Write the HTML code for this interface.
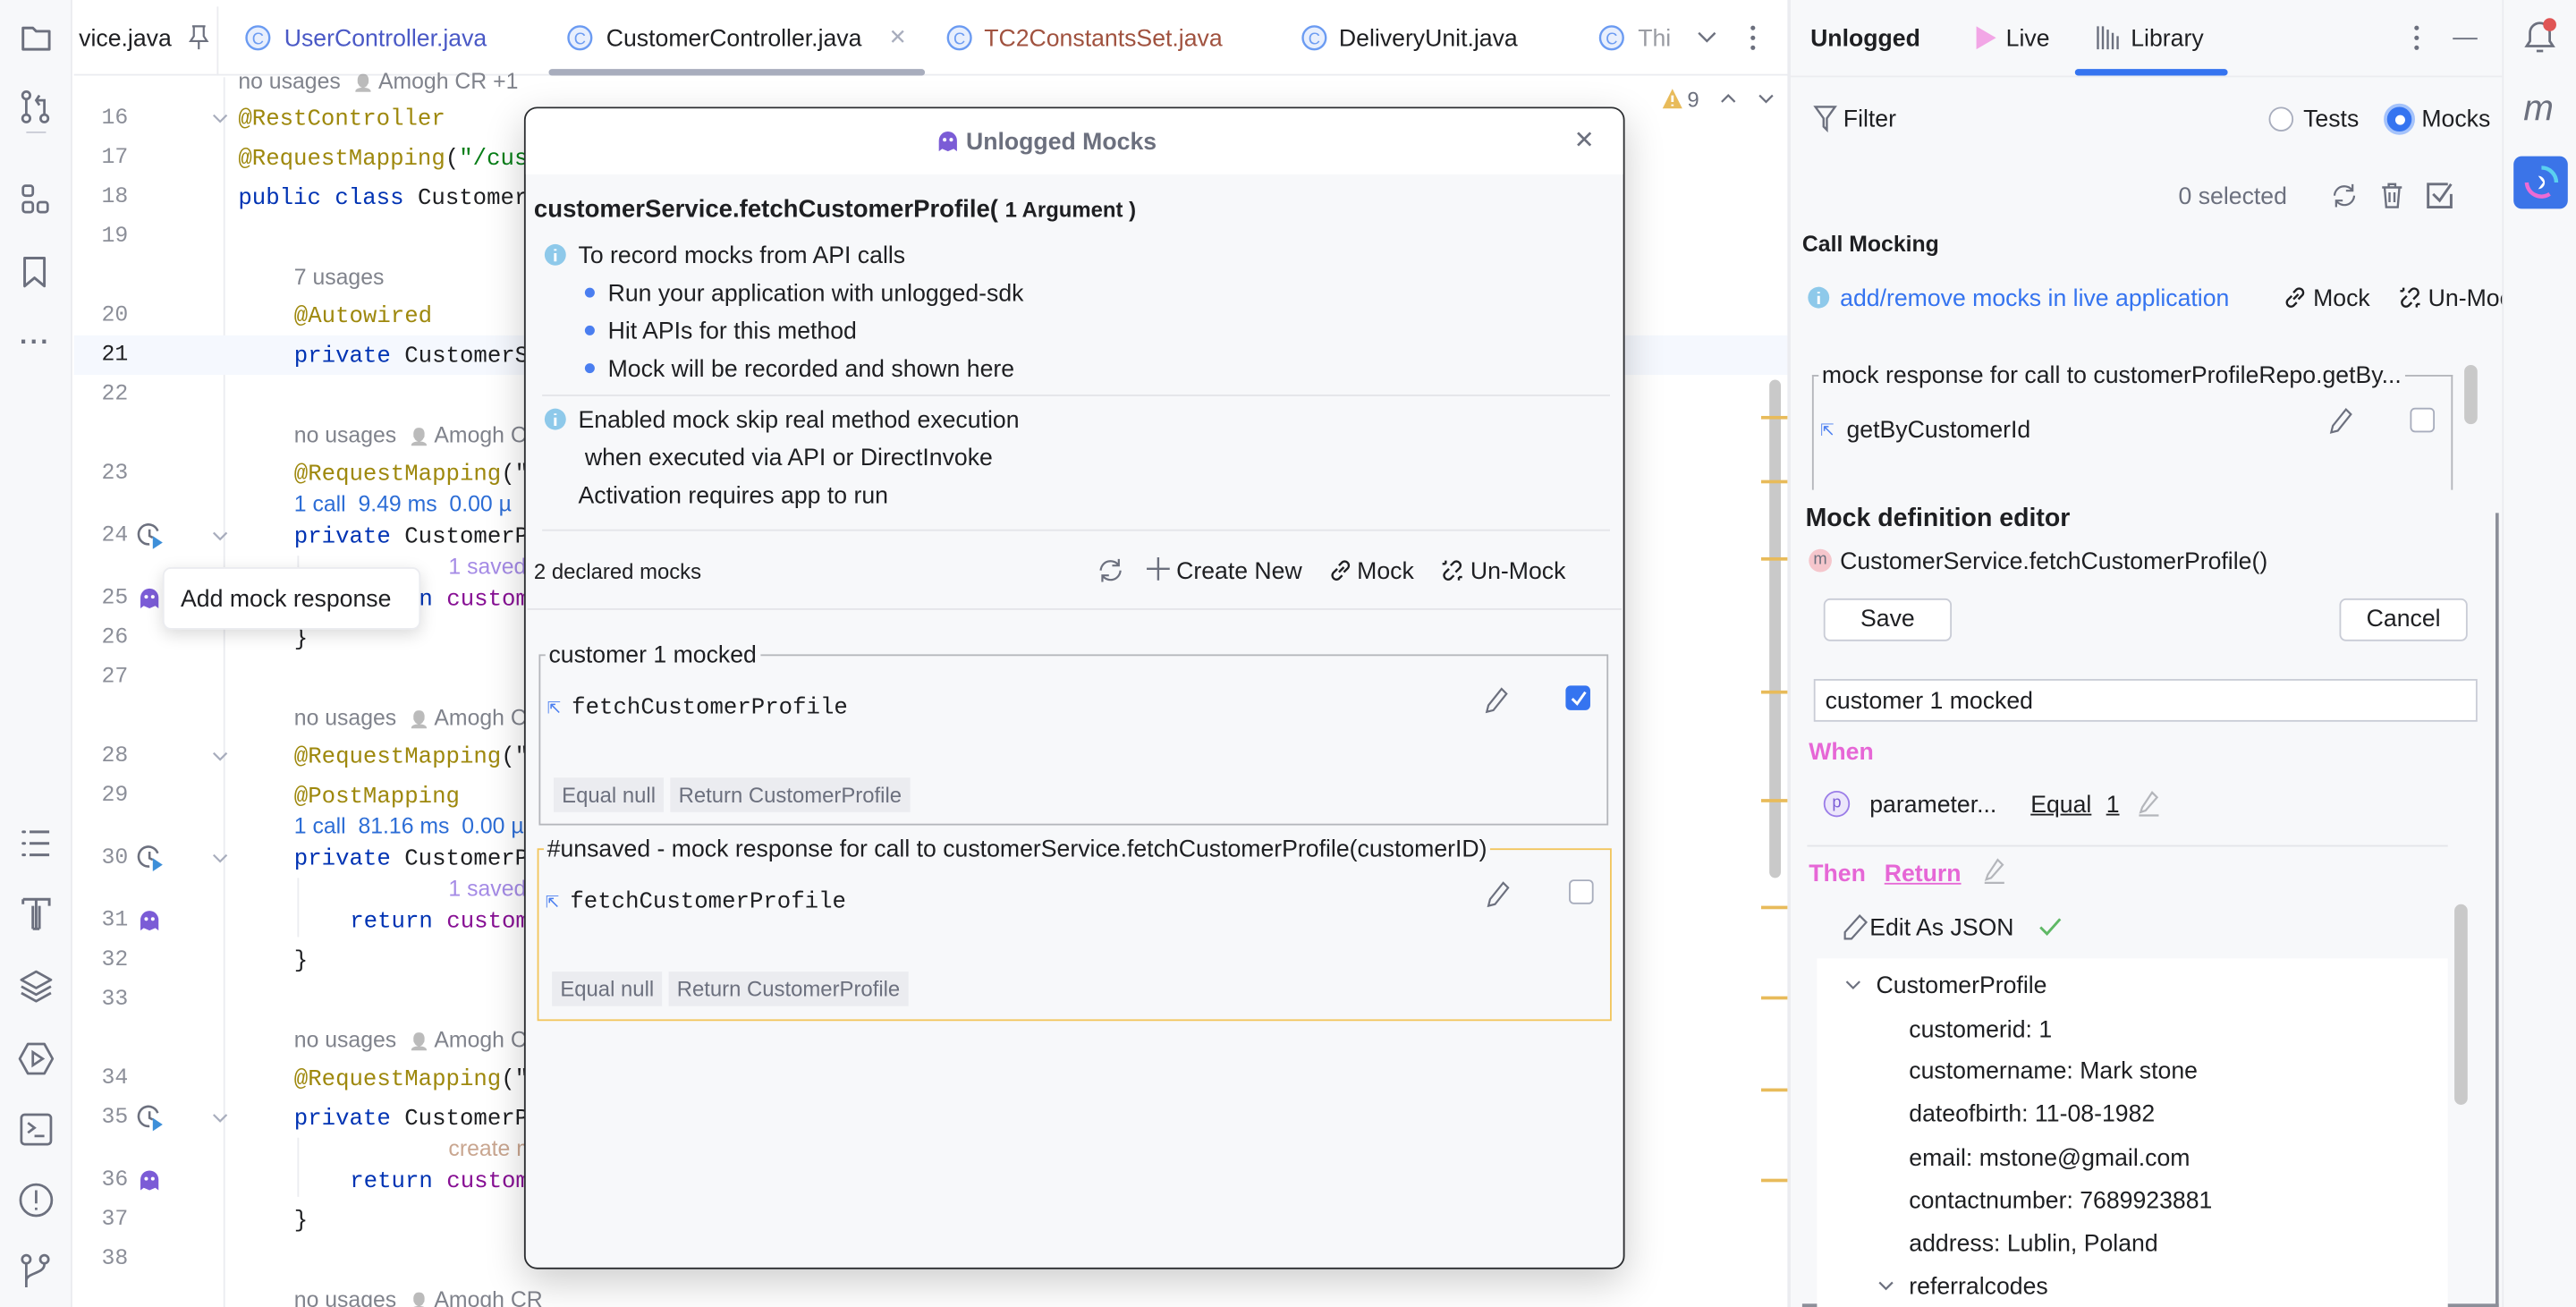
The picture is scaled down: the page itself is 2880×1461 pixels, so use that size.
<!DOCTYPE html>
<html><head><meta charset="utf-8"><style>
*{margin:0;padding:0;box-sizing:border-box}
html,body{width:2880px;height:1461px;overflow:hidden;background:#fff}
#w{position:absolute;left:0;top:0;width:1568px;height:795px;transform:scale(1.83673,1.83774);transform-origin:0 0;font-family:"Liberation Sans",sans-serif;font-size:14.5px;color:#1e1f22;overflow:hidden;background:#fff}
.a{position:absolute;white-space:nowrap;line-height:20px}
.m{font-family:"Liberation Mono",monospace;font-size:14px}
.ln{position:absolute;left:44px;width:34px;text-align:right;color:#8c8f99;font-family:"Liberation Mono",monospace;font-size:13.5px;line-height:20px}
.an{color:#9e880d}.kw{color:#0033b3}.gr{color:#80838c;font-size:13.5px;font-family:"Liberation Sans",sans-serif}
.bl{color:#2c6dd6;font-size:13.5px;font-family:"Liberation Sans",sans-serif}
.pu{color:#871094}
.pi{font-size:10px;filter:grayscale(1) opacity(.45)}
svg{position:absolute;overflow:visible}
.chip{position:absolute;background:#ebecf0;color:#6c707e;font-size:13px;line-height:21px;padding:0 5px;height:21px}
.cb{position:absolute;width:15px;height:15px;border:1.3px solid #a8adbd;border-radius:3px;background:#fff}
.mk{position:absolute;left:1072px;width:16px;height:1.5px;background:#e8bb5a}
</style></head><body><div id="w">

<!-- left toolbar -->
<div style="position:absolute;left:0;top:0;width:44px;height:795px;background:#f7f8fa;border-right:1px solid #ebecf0"></div>
<svg width="20" height="20" style="left:12px;top:13px" fill="none" stroke="#6c707e" stroke-width="1.6"><path d="M2 4h6l2 2h8v11H2z" stroke-linejoin="round"/></svg>
<svg width="20" height="22" style="left:12px;top:55px" fill="none" stroke="#6c707e" stroke-width="1.5"><circle cx="4" cy="3" r="2.3"/><circle cx="4" cy="17" r="2.3"/><circle cx="15" cy="17" r="2.3"/><path d="M4 5v10M15 15V6h-4M12 3l-2 3 2 3"/></svg>
<div style="position:absolute;left:16px;top:80px;width:12px;height:1px;background:#c9ccd6"></div>
<svg width="20" height="20" style="left:12px;top:112px" fill="none" stroke="#6c707e" stroke-width="1.5"><rect x="2" y="1" width="6" height="6" rx="1.5"/><rect x="2" y="11" width="6" height="6" rx="1.5"/><rect x="11" y="11" width="6" height="6" rx="1.5"/></svg>
<svg width="20" height="20" style="left:13px;top:156px" fill="none" stroke="#6c707e" stroke-width="1.6"><path d="M2 1h12v17l-6-5-6 5z" stroke-linejoin="round"/></svg>
<div class="a" style="left:12px;top:199px;color:#6c707e;font-size:16px;letter-spacing:1px;font-weight:bold">···</div>
<svg width="20" height="20" style="left:12px;top:503px" fill="none" stroke="#6c707e" stroke-width="1.6"><path d="M6 3h12M6 10h12M6 17h12"/><path d="M2 3h1M2 10h1M2 17h1" stroke-linecap="round"/></svg>
<svg width="20" height="22" style="left:12px;top:545px" fill="none" stroke="#6c707e" stroke-width="1.6"><path d="M2 2h16v4M2 2v3M10 2v18M8 20h4M8 6v14M12 6v14"/></svg>
<svg width="22" height="22" style="left:11px;top:589px" fill="none" stroke="#6c707e" stroke-width="1.5"><path d="M11 2l9 5-9 5-9-5z M2 11l9 5 9-5M2 15l9 5 9-5" stroke-linejoin="round"/></svg>
<svg width="22" height="22" style="left:11px;top:633px" fill="none" stroke="#6c707e" stroke-width="1.5"><path d="M6 2h10l5 9-5 9H6l-5-9z" stroke-linejoin="round"/><path d="M9 7v8l6-4z"/></svg>
<svg width="20" height="20" style="left:12px;top:677px" fill="none" stroke="#6c707e" stroke-width="1.5"><rect x="1" y="1" width="18" height="18" rx="2"/><path d="M5 6l4 3-4 3M9 14h6"/></svg>
<svg width="22" height="22" style="left:11px;top:719px" fill="none" stroke="#6c707e" stroke-width="1.5"><circle cx="11" cy="11" r="9.5"/><path d="M11 5v8M11 15.5v1.5"/></svg>
<svg width="20" height="22" style="left:12px;top:762px" fill="none" stroke="#6c707e" stroke-width="1.5"><circle cx="4" cy="4" r="2.5"/><circle cx="15" cy="4" r="2.5"/><path d="M4 7v14M15 7c0 6-11 5-11 10"/></svg>

<!-- tab bar -->
<div style="position:absolute;left:45px;top:0;width:1044px;height:46px;background:#fff;border-bottom:1px solid #ebecf0"></div>
<div class="a" style="left:48px;top:14px;color:#1e1f22">vice.java</div>
<svg width="14" height="16" style="left:114px;top:15px" fill="none" stroke="#6c707e" stroke-width="1.2"><path d="M3 1h8M4 1v6l-2 3h10l-2-3V1M7 10v5"/></svg>
<div style="position:absolute;left:132px;top:4px;width:1px;height:42px;background:#ebecf0"></div>
<svg width="16" height="16" style="left:149px;top:15px"><circle cx="8" cy="8" r="7" fill="#e8effd" stroke="#6b9bf2" stroke-width="1.3"/><text x="8" y="12" font-size="10" text-anchor="middle" fill="#6b9bf2" font-family="Liberation Sans">C</text></svg>
<div class="a" style="left:173px;top:14px;color:#4a59c6">UserController.java</div>
<svg width="16" height="16" style="left:345px;top:15px"><circle cx="8" cy="8" r="7" fill="#e8effd" stroke="#6b9bf2" stroke-width="1.3"/><text x="8" y="12" font-size="10" text-anchor="middle" fill="#6b9bf2" font-family="Liberation Sans">C</text></svg>
<div class="a" style="left:369px;top:14px">CustomerController.java</div>
<div class="a" style="left:541px;top:13px;color:#a8adbd;font-size:13px">✕</div>
<div style="position:absolute;left:334px;top:42px;width:229px;height:4px;border-radius:2px;background:#a8adbd"></div>
<svg width="16" height="16" style="left:576px;top:15px"><circle cx="8" cy="8" r="7" fill="#e8effd" stroke="#6b9bf2" stroke-width="1.3"/><text x="8" y="12" font-size="10" text-anchor="middle" fill="#6b9bf2" font-family="Liberation Sans">C</text></svg>
<div class="a" style="left:599px;top:14px;color:#a0523f">TC2ConstantsSet.java</div>
<svg width="16" height="16" style="left:792px;top:15px"><circle cx="8" cy="8" r="7" fill="#e8effd" stroke="#6b9bf2" stroke-width="1.3"/><text x="8" y="12" font-size="10" text-anchor="middle" fill="#6b9bf2" font-family="Liberation Sans">C</text></svg>
<div class="a" style="left:815px;top:14px">DeliveryUnit.java</div>
<svg width="16" height="16" style="left:973px;top:15px"><circle cx="8" cy="8" r="7" fill="#e8effd" stroke="#6b9bf2" stroke-width="1.3"/><text x="8" y="12" font-size="10" text-anchor="middle" fill="#6b9bf2" font-family="Liberation Sans">C</text></svg>
<div class="a" style="left:997px;top:14px;color:#9a9ca3">Thi</div>
<svg width="12" height="8" style="left:1033px;top:19px" fill="none" stroke="#6c707e" stroke-width="1.3"><path d="M1 1l5 5 5-5"/></svg>
<svg width="4" height="16" style="left:1065px;top:15px" fill="#6c707e"><circle cx="2" cy="2" r="1.4"/><circle cx="2" cy="8" r="1.4"/><circle cx="2" cy="14" r="1.4"/></svg>

<!-- editor -->
<div style="position:absolute;left:136px;top:47px;width:1px;height:748px;background:#ebecf0"></div>
<div style="position:absolute;left:45px;top:204px;width:1043px;height:24px;background:#f5f8fe"></div>
<div style="position:absolute;left:1088px;top:0;width:2px;height:795px;background:#ebecf0"></div>

<div class="a gr" style="left:145px;top:40px">no usages &nbsp;<span class="pi">👤</span> Amogh CR +1</div>
<div class="ln" style="top:63px">16</div><div class="a m an" style="left:145px;top:63px">@RestController</div>
<div class="ln" style="top:87px">17</div><div class="a m" style="left:145px;top:87px"><span class="an">@RequestMapping</span>(<span style="color:#067d17">"/customer"</span>)</div>
<div class="ln" style="top:111px">18</div><div class="a m" style="left:145px;top:111px"><span class="kw">public class</span> CustomerController {</div>
<div class="ln" style="top:135px">19</div>
<div class="a gr" style="left:179px;top:159px">7 usages</div>
<div class="ln" style="top:183px">20</div><div class="a m an" style="left:179px;top:183px">@Autowired</div>
<div class="ln" style="top:207px;color:#1e1f22">21</div><div class="a m" style="left:179px;top:207px"><span class="kw">private</span> CustomerService</div>
<div class="ln" style="top:231px">22</div>
<div class="a gr" style="left:179px;top:255px">no usages &nbsp;<span class="pi">👤</span> Amogh CR</div>
<div class="ln" style="top:279px">23</div><div class="a m" style="left:179px;top:279px"><span class="an">@RequestMapping</span>("</div>
<div class="a bl" style="left:179px;top:297px">1 call &nbsp;9.49 ms &nbsp;0.00 µ</div>
<div class="ln" style="top:317px">24</div><div class="a m" style="left:179px;top:317px"><span class="kw">private</span> CustomerProfile</div>
<div class="a gr" style="left:273px;top:335px;color:#a58be6">1 saved</div>
<div class="ln" style="top:355px">25</div><div class="a m" style="left:213px;top:355px"><span class="kw">return</span> <span class="pu">customer</span></div>
<div class="ln" style="top:379px">26</div><div class="a m" style="left:179px;top:379px">}</div>
<div class="ln" style="top:403px">27</div>
<div class="a gr" style="left:179px;top:427px">no usages &nbsp;<span class="pi">👤</span> Amogh CR</div>
<div class="ln" style="top:451px">28</div><div class="a m" style="left:179px;top:451px"><span class="an">@RequestMapping</span>("</div>
<div class="ln" style="top:475px">29</div><div class="a m an" style="left:179px;top:475px">@PostMapping</div>
<div class="a bl" style="left:179px;top:493px">1 call &nbsp;81.16 ms &nbsp;0.00 µ</div>
<div class="ln" style="top:513px">30</div><div class="a m" style="left:179px;top:513px"><span class="kw">private</span> CustomerProfile</div>
<div class="a gr" style="left:273px;top:531px;color:#a58be6">1 saved</div>
<div class="ln" style="top:551px">31</div><div class="a m" style="left:213px;top:551px"><span class="kw">return</span> <span class="pu">customer</span></div>
<div class="ln" style="top:575px">32</div><div class="a m" style="left:179px;top:575px">}</div>
<div class="ln" style="top:599px">33</div>
<div class="a gr" style="left:179px;top:623px">no usages &nbsp;<span class="pi">👤</span> Amogh CR</div>
<div class="ln" style="top:647px">34</div><div class="a m" style="left:179px;top:647px"><span class="an">@RequestMapping</span>("</div>
<div class="ln" style="top:671px">35</div><div class="a m" style="left:179px;top:671px"><span class="kw">private</span> CustomerProfile</div>
<div class="a gr" style="left:273px;top:689px;color:#c9a690">create mock</div>
<div class="ln" style="top:709px">36</div><div class="a m" style="left:213px;top:709px"><span class="kw">return</span> <span class="pu">customer</span></div>
<div class="ln" style="top:733px">37</div><div class="a m" style="left:179px;top:733px">}</div>
<div class="ln" style="top:757px">38</div>
<div class="a gr" style="left:179px;top:781px">no usages &nbsp;<span class="pi">👤</span> Amogh CR</div>
<!-- indent guides -->
<div style="position:absolute;left:181px;top:338px;width:1px;height:36px;background:#ebecf0"></div>
<div style="position:absolute;left:181px;top:534px;width:1px;height:36px;background:#ebecf0"></div>
<div style="position:absolute;left:181px;top:692px;width:1px;height:36px;background:#ebecf0"></div>
<!-- fold chevrons -->
<svg width="10" height="6" style="left:129px;top:69px" fill="none" stroke="#a8adbd" stroke-width="1.2"><path d="M1 1l4 4 4-4"/></svg>
<svg width="10" height="6" style="left:129px;top:323px" fill="none" stroke="#a8adbd" stroke-width="1.2"><path d="M1 1l4 4 4-4"/></svg>
<svg width="10" height="6" style="left:129px;top:457px" fill="none" stroke="#a8adbd" stroke-width="1.2"><path d="M1 1l4 4 4-4"/></svg>
<svg width="10" height="6" style="left:129px;top:519px" fill="none" stroke="#a8adbd" stroke-width="1.2"><path d="M1 1l4 4 4-4"/></svg>
<svg width="10" height="6" style="left:129px;top:677px" fill="none" stroke="#a8adbd" stroke-width="1.2"><path d="M1 1l4 4 4-4"/></svg>
<!-- gutter icons -->
<svg width="16" height="16" style="left:84px;top:318px" fill="none" stroke="#6c707e" stroke-width="1.4"><path d="M12 5A6 6 0 1 0 7 13"/><path d="M7 4v4l2 1"/><path d="M9 8l6 4-6 4z" fill="#3d8fd9" stroke="none"/></svg>
<svg width="16" height="16" style="left:84px;top:514px" fill="none" stroke="#6c707e" stroke-width="1.4"><path d="M12 5A6 6 0 1 0 7 13"/><path d="M7 4v4l2 1"/><path d="M9 8l6 4-6 4z" fill="#3d8fd9" stroke="none"/></svg>
<svg width="16" height="16" style="left:84px;top:672px" fill="none" stroke="#6c707e" stroke-width="1.4"><path d="M12 5A6 6 0 1 0 7 13"/><path d="M7 4v4l2 1"/><path d="M9 8l6 4-6 4z" fill="#3d8fd9" stroke="none"/></svg>
<svg width="12" height="12" style="left:85px;top:358px"><path d="M6 0a5.5 5.5 0 0 1 5.5 5.5V12l-2-1.5L6 12 2.5 10.5.5 12V5.5A5.5 5.5 0 0 1 6 0z" fill="#7b5cd6"/><circle cx="4" cy="5" r="1.1" fill="#fff"/><circle cx="8" cy="5" r="1.1" fill="#fff"/></svg>
<svg width="12" height="12" style="left:85px;top:554px"><path d="M6 0a5.5 5.5 0 0 1 5.5 5.5V12l-2-1.5L6 12 2.5 10.5.5 12V5.5A5.5 5.5 0 0 1 6 0z" fill="#7b5cd6"/><circle cx="4" cy="5" r="1.1" fill="#fff"/><circle cx="8" cy="5" r="1.1" fill="#fff"/></svg>
<svg width="12" height="12" style="left:85px;top:712px"><path d="M6 0a5.5 5.5 0 0 1 5.5 5.5V12l-2-1.5L6 12 2.5 10.5.5 12V5.5A5.5 5.5 0 0 1 6 0z" fill="#7b5cd6"/><circle cx="4" cy="5" r="1.1" fill="#fff"/><circle cx="8" cy="5" r="1.1" fill="#fff"/></svg>

<!-- tooltip -->
<div style="position:absolute;left:99px;top:345px;width:157px;height:38px;background:#fff;border:1px solid #ebecf0;border-radius:5px;box-shadow:0 3px 10px rgba(0,0,0,.15)"></div>
<div class="a" style="left:110px;top:355px">Add mock response</div>

<!-- warnings & scrollbar -->
<svg width="14" height="14" style="left:1011px;top:53px"><path d="M7 1l6 12H1z" fill="#e8bb5a"/><path d="M7 5v4M7 10.5v1" stroke="#fff" stroke-width="1.5"/></svg>
<div class="a" style="left:1027px;top:51px;font-size:13px;color:#6c707e">9</div>
<svg width="10" height="6" style="left:1047px;top:57px" fill="none" stroke="#6c707e" stroke-width="1.2"><path d="M1 5l4-4 4 4"/></svg>
<svg width="10" height="6" style="left:1070px;top:57px" fill="none" stroke="#6c707e" stroke-width="1.2"><path d="M1 1l4 4 4-4"/></svg>
<div style="position:absolute;left:1077px;top:231px;width:7px;height:303px;border-radius:4px;background:#c9c9c9"></div>
<div class="mk" style="top:253px"></div><div class="mk" style="top:292px"></div><div class="mk" style="top:339px"></div><div class="mk" style="top:420px"></div><div class="mk" style="top:486px"></div><div class="mk" style="top:551px"></div><div class="mk" style="top:606px"></div><div class="mk" style="top:662px"></div><div class="mk" style="top:717px"></div>

<!-- modal -->
<div style="position:absolute;left:319px;top:65px;width:670px;height:707px;background:#f7f8fa;border:1.3px solid #2b2d30;border-radius:8px;box-shadow:0 8px 24px rgba(0,0,0,.2);overflow:hidden">
 <div style="position:absolute;left:0;top:0;width:100%;height:40px;background:#fff"></div>
</div>
<svg width="12" height="12" style="left:571px;top:80px"><path d="M6 0a5.5 5.5 0 0 1 5.5 5.5V12l-2-1.5L6 12 2.5 10.5.5 12V5.5A5.5 5.5 0 0 1 6 0z" fill="#7b5cd6"/><circle cx="4" cy="5" r="1.1" fill="#fff"/><circle cx="8" cy="5" r="1.1" fill="#fff"/></svg>
<div class="a" style="left:588px;top:77px;font-weight:bold;color:#6c707e">Unlogged Mocks</div>
<div class="a" style="left:958px;top:76px;color:#6c707e;font-size:15px">✕</div>
<div class="a" style="left:325px;top:118px;font-weight:bold;font-size:15px">customerService.fetchCustomerProfile( <span style="font-size:13px">1 Argument )</span></div>
<svg width="14" height="14" style="left:331px;top:148px"><circle cx="7" cy="7" r="6.5" fill="#8ec9ea"/><path d="M7 6v5M7 3.5v1" stroke="#fff" stroke-width="1.6"/></svg>
<div class="a" style="left:352px;top:146px">To record mocks from API calls</div>
<div style="position:absolute;left:356px;top:175px;width:6px;height:6px;border-radius:3px;background:#4a7ef0"></div><div class="a" style="left:370px;top:169px">Run your application with unlogged-sdk</div>
<div style="position:absolute;left:356px;top:198px;width:6px;height:6px;border-radius:3px;background:#4a7ef0"></div><div class="a" style="left:370px;top:192px">Hit APIs for this method</div>
<div style="position:absolute;left:356px;top:221px;width:6px;height:6px;border-radius:3px;background:#4a7ef0"></div><div class="a" style="left:370px;top:215px">Mock will be recorded and shown here</div>
<div style="position:absolute;left:330px;top:240px;width:650px;height:1px;background:#e4e5e9"></div>
<svg width="14" height="14" style="left:331px;top:248px"><circle cx="7" cy="7" r="6.5" fill="#8ec9ea"/><path d="M7 6v5M7 3.5v1" stroke="#fff" stroke-width="1.6"/></svg>
<div class="a" style="left:352px;top:246px">Enabled mock skip real method execution</div>
<div class="a" style="left:356px;top:269px">when executed via API or DirectInvoke</div>
<div class="a" style="left:352px;top:292px">Activation requires app to run</div>
<div style="position:absolute;left:330px;top:322px;width:650px;height:1px;background:#e4e5e9"></div>
<div class="a" style="left:325px;top:338px;font-size:13px">2 declared mocks</div>
<svg width="18" height="18" style="left:667px;top:338px" fill="none" stroke="#6c707e" stroke-width="1.2"><path d="M3 9a6 6 0 0 1 11-3M15 9a6 6 0 0 1-11 3M14 2v4h-4M4 16v-4h4"/></svg>
<svg width="14" height="14" style="left:698px;top:339px" stroke="#6c707e" stroke-width="1.3"><path d="M7 0v14M0 7h14"/></svg>
<div class="a" style="left:716px;top:338px">Create New</div>
<svg width="14" height="14" style="left:809px;top:340px" fill="none" stroke="#1e1f22" stroke-width="1.3"><path d="M6 8l3-3M5 6L2.5 8.5a2.5 2.5 0 0 0 3.5 3.5L8 10M9 8l2.5-2.5A2.5 2.5 0 0 0 8 2L6 4"/></svg>
<div class="a" style="left:826px;top:338px">Mock</div>
<svg width="14" height="14" style="left:877px;top:340px" fill="none" stroke="#1e1f22" stroke-width="1.3"><path d="M5 6L2.5 8.5a2.5 2.5 0 0 0 3.5 3.5L8 10M9 8l2.5-2.5A2.5 2.5 0 0 0 8 2L6 4M1 3h2M3 1v2M11 13v-2M13 11h-2"/></svg>
<div class="a" style="left:895px;top:338px">Un-Mock</div>
<div style="position:absolute;left:321px;top:370px;width:666px;height:1px;background:#e4e5e9"></div>

<div style="position:absolute;left:328px;top:398px;width:651px;height:104px;border:1.5px solid #b4b6bb"></div>
<div class="a" style="left:332px;top:389px;background:#f7f8fa;padding:0 2px">customer 1 mocked</div>
<div class="a" style="left:333px;top:422px;color:#4a7ef0;font-size:10px">⇱</div>
<div class="a m" style="left:348px;top:421px">fetchCustomerProfile</div>
<svg width="14" height="16" style="left:904px;top:418px" fill="none" stroke="#6c707e" stroke-width="1.2"><path d="M10 1l3 3-8 10-4 1 1-4z"/></svg>
<div class="cb" style="left:953px;top:417px;background:#3574f0;border-color:#3574f0"></div>
<svg width="10" height="10" style="left:956px;top:420px" fill="none" stroke="#fff" stroke-width="1.6"><path d="M1 5l3 3 5-7"/></svg>
<div class="chip" style="left:337px;top:473px">Equal null</div>
<div class="chip" style="left:408px;top:473px">Return CustomerProfile</div>

<div style="position:absolute;left:327px;top:516px;width:654px;height:105px;border:1.5px solid #f2c55c"></div>
<div class="a" style="left:331px;top:507px;background:#f7f8fa;padding:0 2px">#unsaved - mock response for call to customerService.fetchCustomerProfile(customerID)</div>
<div class="a" style="left:332px;top:540px;color:#4a7ef0;font-size:10px">⇱</div>
<div class="a m" style="left:347px;top:539px">fetchCustomerProfile</div>
<svg width="14" height="16" style="left:905px;top:536px" fill="none" stroke="#6c707e" stroke-width="1.2"><path d="M10 1l3 3-8 10-4 1 1-4z"/></svg>
<div class="cb" style="left:955px;top:535px"></div>
<div class="chip" style="left:336px;top:591px">Equal null</div>
<div class="chip" style="left:407px;top:591px">Return CustomerProfile</div>

<!-- right panel -->
<div style="position:absolute;left:1090px;top:0;width:433px;height:795px;background:#f7f8fa"></div>
<div style="position:absolute;left:1090px;top:46px;width:433px;height:1px;background:#ebecf0"></div>
<div class="a" style="left:1102px;top:14px;font-weight:bold">Unlogged</div>
<svg width="14" height="16" style="left:1202px;top:15px"><path d="M1 1l12 7-12 7z" fill="#f2a6e6"/></svg>
<div class="a" style="left:1221px;top:14px">Live</div>
<svg width="16" height="14" style="left:1276px;top:16px" stroke="#6c707e" stroke-width="1.3"><path d="M1 0v14M4 0v14M7 2v12M10 4v10M13 6v8"/></svg>
<div class="a" style="left:1297px;top:14px">Library</div>
<div style="position:absolute;left:1263px;top:42px;width:93px;height:4px;border-radius:2px;background:#3574f0"></div>
<svg width="4" height="16" style="left:1469px;top:15px" fill="#6c707e"><circle cx="2" cy="2" r="1.4"/><circle cx="2" cy="8" r="1.4"/><circle cx="2" cy="14" r="1.4"/></svg>
<div style="position:absolute;left:1493px;top:23px;width:15px;height:1.3px;background:#6c707e"></div>

<svg width="14" height="16" style="left:1104px;top:64px" fill="none" stroke="#6c707e" stroke-width="1.3"><path d="M1 1h12L8 8v7L6 13V8z"/></svg>
<div class="a" style="left:1122px;top:63px">Filter</div>
<div style="position:absolute;left:1381px;top:65px;width:15px;height:15px;border-radius:50%;border:1.2px solid #a8adbd;background:#fff"></div>
<div class="a" style="left:1402px;top:63px">Tests</div>
<div style="position:absolute;left:1451px;top:63px;width:19px;height:19px;border-radius:50%;background:#3574f0;border:2px solid #a5c3fb"></div>
<div style="position:absolute;left:1457.5px;top:69.5px;width:6px;height:6px;border-radius:50%;background:#fff"></div>
<div class="a" style="left:1474px;top:63px">Mocks</div>
<div class="a" style="left:1326px;top:110px;color:#6c707e">0 selected</div>
<svg width="18" height="18" style="left:1418px;top:110px" fill="none" stroke="#6c707e" stroke-width="1.2"><path d="M3 9a6 6 0 0 1 11-3M15 9a6 6 0 0 1-11 3M14 2v4h-4M4 16v-4h4"/></svg>
<svg width="14" height="16" style="left:1449px;top:111px" fill="none" stroke="#6c707e" stroke-width="1.3"><path d="M1 3h12M5 3V1h4v2M2.5 3l1 12h7l1-12M5.5 6v6M8.5 6v6"/></svg>
<svg width="16" height="16" style="left:1477px;top:111px" fill="none" stroke="#6c707e" stroke-width="1.6"><path d="M13 1H1v14h14V7"/><path d="M4 7l4 4 7-10"/></svg>
<div class="a" style="left:1097px;top:139px;font-weight:bold;font-size:13.5px">Call Mocking</div>
<svg width="14" height="14" style="left:1100px;top:174px"><circle cx="7" cy="7" r="6.5" fill="#8ec9ea"/><path d="M7 6v5M7 3.5v1" stroke="#fff" stroke-width="1.6"/></svg>
<div class="a" style="left:1120px;top:172px;color:#3574f0">add/remove mocks in live application</div>
<svg width="14" height="14" style="left:1390px;top:174px" fill="none" stroke="#1e1f22" stroke-width="1.3"><path d="M6 8l3-3M5 6L2.5 8.5a2.5 2.5 0 0 0 3.5 3.5L8 10M9 8l2.5-2.5A2.5 2.5 0 0 0 8 2L6 4"/></svg>
<div class="a" style="left:1408px;top:172px">Mock</div>
<svg width="14" height="14" style="left:1460px;top:174px" fill="none" stroke="#1e1f22" stroke-width="1.3"><path d="M5 6L2.5 8.5a2.5 2.5 0 0 0 3.5 3.5L8 10M9 8l2.5-2.5A2.5 2.5 0 0 0 8 2L6 4M1 3h2M3 1v2M11 13v-2M13 11h-2"/></svg>
<div class="a" style="left:1478px;top:172px">Un-Mock</div>
<div style="position:absolute;left:1103px;top:228px;width:390px;height:70px;border:1.3px solid #b4b6bb;border-bottom:none"></div>
<div class="a" style="left:1107px;top:219px;background:#f7f8fa;padding:0 2px">mock response for call to customerProfileRepo.getBy...</div>
<div class="a" style="left:1108px;top:253px;color:#4a7ef0;font-size:10px">⇱</div>
<div class="a" style="left:1124px;top:252px">getByCustomerId</div>
<svg width="14" height="16" style="left:1418px;top:248px" fill="none" stroke="#6c707e" stroke-width="1.2"><path d="M10 1l3 3-8 10-4 1 1-4z"/></svg>
<div class="cb" style="left:1467px;top:248px"></div>
<div style="position:absolute;left:1500px;top:222px;width:8px;height:36px;border-radius:4px;background:#c9c9c9"></div>

<!-- editor sub-panel -->
<div style="position:absolute;left:1097px;top:312px;width:424px;height:483px;border-right:2px solid #8c8f99;border-bottom:2px solid #8c8f99"></div>
<div class="a" style="left:1099px;top:306px;font-weight:bold;font-size:15.5px">Mock definition editor</div>
<div style="position:absolute;left:1101px;top:334px;width:14px;height:14px;border-radius:50%;background:#f5c6cc;color:#6c707e;font-size:10px;line-height:13px;text-align:center">m</div>
<div class="a" style="left:1120px;top:332px">CustomerService.fetchCustomerProfile()</div>
<div style="position:absolute;left:1110px;top:364px;width:78px;height:26px;background:#fff;border:1px solid #c9ccd6;border-radius:4px;text-align:center;line-height:24px">Save</div>
<div style="position:absolute;left:1424px;top:364px;width:78px;height:26px;background:#fff;border:1px solid #c9ccd6;border-radius:4px;text-align:center;line-height:24px">Cancel</div>
<div style="position:absolute;left:1104px;top:413px;width:404px;height:26px;background:#fff;border:1.3px solid #c9ccd6"></div>
<div class="a" style="left:1111px;top:417px">customer 1 mocked</div>
<div class="a" style="left:1101px;top:448px;font-weight:bold;color:#e667d6">When</div>
<div style="position:absolute;left:1110px;top:481px;width:16px;height:16px;border-radius:50%;border:1.3px solid #9b7de8;background:#ece6fb;color:#7b5cd6;font-size:10px;line-height:14px;text-align:center">p</div>
<div class="a" style="left:1138px;top:480px">parameter...</div>
<div class="a" style="left:1236px;top:480px;text-decoration:underline">Equal</div>
<div class="a" style="left:1282px;top:480px;text-decoration:underline">1</div>
<svg width="14" height="16" style="left:1301px;top:481px" fill="none" stroke="#b4b6bb" stroke-width="1.2"><path d="M9 1l3 3-7 8-3 1 1-3zM1 15h12"/></svg>
<div style="position:absolute;left:1100px;top:514px;width:390px;height:1px;background:#e4e5e9"></div>
<div class="a" style="left:1101px;top:522px;font-weight:bold;color:#e667d6">Then</div>
<div class="a" style="left:1147px;top:522px;font-weight:bold;color:#e667d6;text-decoration:underline">Return</div>
<svg width="14" height="16" style="left:1207px;top:522px" fill="none" stroke="#b4b6bb" stroke-width="1.2"><path d="M9 1l3 3-7 8-3 1 1-3zM1 15h12"/></svg>
<svg width="16" height="16" style="left:1121px;top:556px" fill="none" stroke="#6c707e" stroke-width="1.2"><path d="M11 1l4 4-9 10H2v-4z"/></svg>
<div class="a" style="left:1138px;top:555px">Edit As JSON</div>
<svg width="14" height="12" style="left:1241px;top:558px" fill="none" stroke="#5fb865" stroke-width="1.6"><path d="M1 6l4 4 8-9"/></svg>
<div style="position:absolute;left:1106px;top:583px;width:384px;height:212px;background:#fff"></div>
<svg width="10" height="6" style="left:1123px;top:596px" fill="none" stroke="#6c707e" stroke-width="1.2"><path d="M1 1l4 4 4-4"/></svg>
<div class="a" style="left:1142px;top:590px">CustomerProfile</div>
<div class="a" style="left:1162px;top:617px">customerid: 1</div>
<div class="a" style="left:1162px;top:642px">customername: Mark stone</div>
<div class="a" style="left:1162px;top:668px">dateofbirth: 11-08-1982</div>
<div class="a" style="left:1162px;top:695px">email: mstone@gmail.com</div>
<div class="a" style="left:1162px;top:721px">contactnumber: 7689923881</div>
<div class="a" style="left:1162px;top:747px">address: Lublin, Poland</div>
<svg width="10" height="6" style="left:1143px;top:779px" fill="none" stroke="#6c707e" stroke-width="1.2"><path d="M1 1l4 4 4-4"/></svg>
<div class="a" style="left:1162px;top:773px">referralcodes</div>
<div style="position:absolute;left:1494px;top:550px;width:8px;height:122px;border-radius:4px;background:#c9c9c9"></div>

<!-- right strip -->
<div style="position:absolute;left:1523px;top:0;width:45px;height:795px;background:#f7f8fa;border-left:1px solid #ebecf0"></div>
<svg width="22" height="24" style="left:1535px;top:10px" fill="none" stroke="#6c707e" stroke-width="1.5"><path d="M3 18h16l-2-3v-5a6 6 0 0 0-12 0v5zM9 21h4"/><circle cx="17" cy="5" r="4" fill="#e05555" stroke="none"/></svg>
<div class="a" style="left:1536px;top:54px;font-size:22px;font-style:italic;color:#6c707e;line-height:24px">m</div>
<div style="position:absolute;left:1530px;top:95px;width:33px;height:32px;border-radius:5px;background:#3b74e8"></div>
<svg width="24" height="24" style="left:1535px;top:99px" fill="none" stroke-width="2.4"><path d="M12 3a9 9 0 0 1 9 9" stroke="#5ad0f0"/><path d="M3 12a9 9 0 0 0 14 7" stroke="#ec6bd4"/><path d="M10 8a4 4 0 1 1 0 8l3-4z" fill="#fff" stroke="none"/></svg>

</div></body></html>
